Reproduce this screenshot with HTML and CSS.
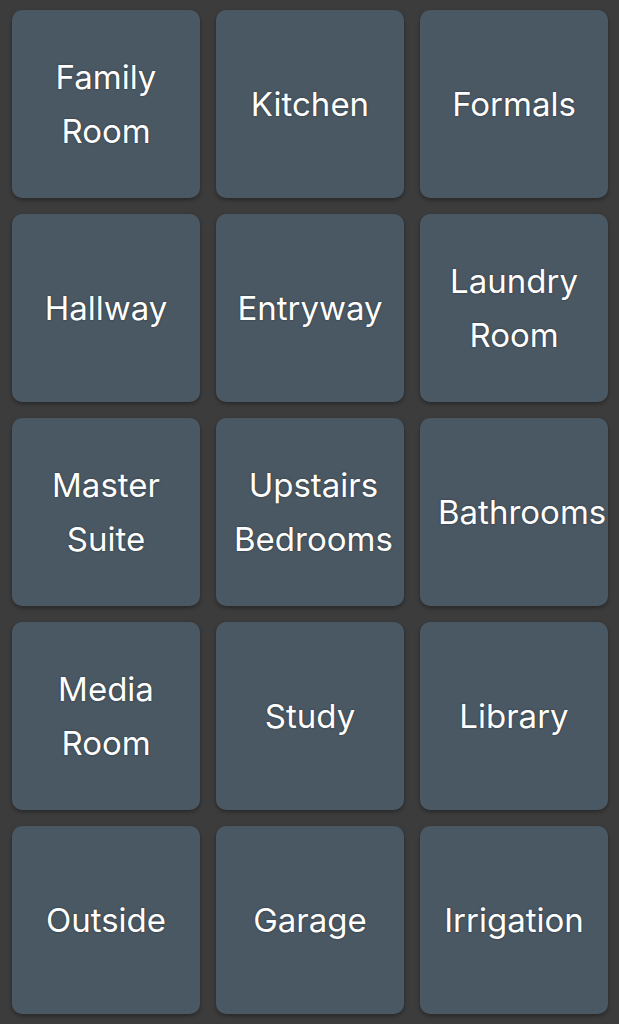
FILE: index.html
```html
<!DOCTYPE html>
<html lang="en">
<head>
    <meta charset="UTF-8">
    <meta name="viewport" content="width=device-width, initial-scale=1.0">
    <title>Rooms</title>
    <link rel="stylesheet" href="styles.css">
</head>
<body>
    <div class="rooms">
        <div class="room">Family Room</div>
        <div class="room">Kitchen</div>
        <div class="room">Formals</div>
        <div class="room">Hallway</div>
        <div class="room">Entryway</div>
        <div class="room">Laundry Room</div>
        <div class="room">Master Suite</div>
        <div class="room">Upstairs Bedrooms</div>
        <div class="room">Bathrooms</div>
        <div class="room">Media Room</div>
        <div class="room">Study</div>
        <div class="room">Library</div>
        <div class="room">Outside</div>
        <div class="room">Garage</div>
        <div class="room">Irrigation</div>
    </div>
</body>
</html>
```

FILE: styles.css
```css
body {
    margin: 0;
    background: #3c3c3c;
    font-family: 'Inter', 'Noto Sans', sans-serif;
    color: white;
}

.rooms {
    display: grid;
    grid-template-columns: repeat(3, 188px);
    grid-auto-rows: 188px;
    gap: 16px;
    padding: 10px 12px;
}

.room {
    background: #4a5863;
    border-radius: 10px;
    box-shadow: 0 2px 4px rgba(0, 0, 0, 0.35);
    padding: 0 18px;
    display: flex;
    align-items: center;
    justify-content: safe center;
    text-align: center;
    font-size: 33px;
    line-height: 54px;
    text-shadow: 0 0 2px rgba(0, 0, 0, 0.5);
}
```
